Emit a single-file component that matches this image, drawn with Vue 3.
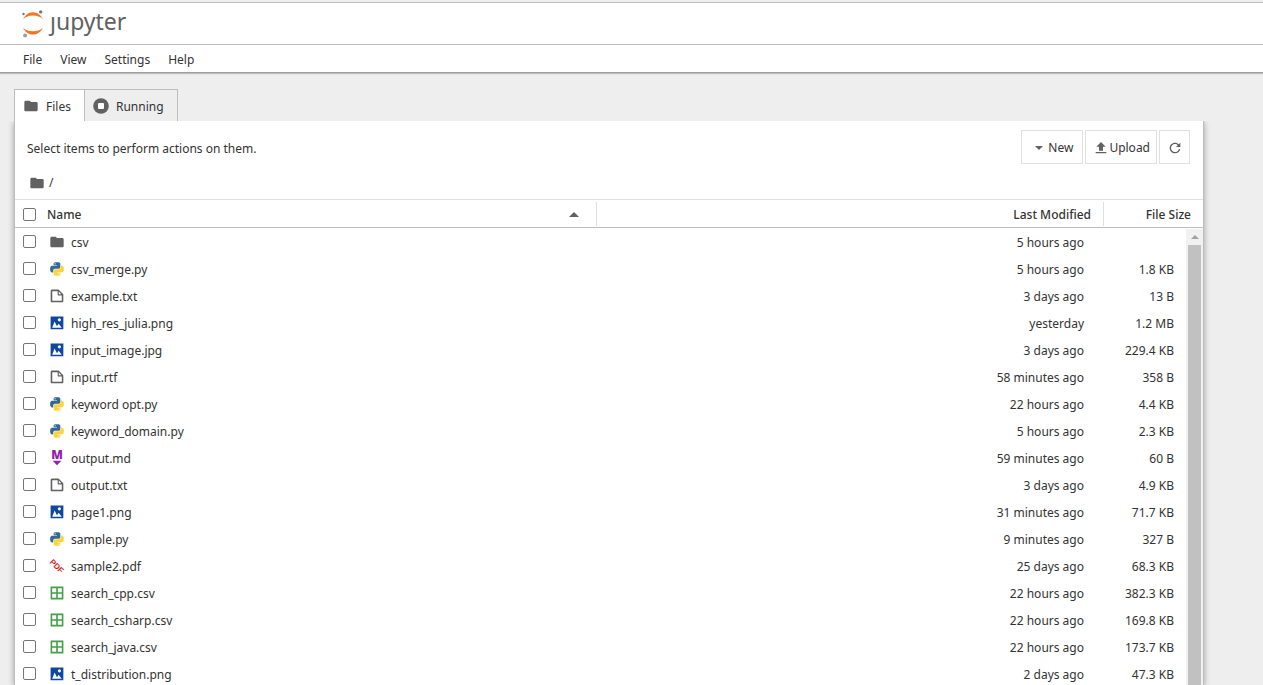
<script setup>
import { ref } from 'vue'

const menus = ['File', 'View', 'Settings', 'Help']

const files = ref([
  { name: 'csv', type: 'folder', modified: '5 hours ago', size: '' },
  { name: 'csv_merge.py', type: 'python', modified: '5 hours ago', size: '1.8 KB' },
  { name: 'example.txt', type: 'file', modified: '3 days ago', size: '13 B' },
  { name: 'high_res_julia.png', type: 'image', modified: 'yesterday', size: '1.2 MB' },
  { name: 'input_image.jpg', type: 'image', modified: '3 days ago', size: '229.4 KB' },
  { name: 'input.rtf', type: 'file', modified: '58 minutes ago', size: '358 B' },
  { name: 'keyword opt.py', type: 'python', modified: '22 hours ago', size: '4.4 KB' },
  { name: 'keyword_domain.py', type: 'python', modified: '5 hours ago', size: '2.3 KB' },
  { name: 'output.md', type: 'markdown', modified: '59 minutes ago', size: '60 B' },
  { name: 'output.txt', type: 'file', modified: '3 days ago', size: '4.9 KB' },
  { name: 'page1.png', type: 'image', modified: '31 minutes ago', size: '71.7 KB' },
  { name: 'sample.py', type: 'python', modified: '9 minutes ago', size: '327 B' },
  { name: 'sample2.pdf', type: 'pdf', modified: '25 days ago', size: '68.3 KB' },
  { name: 'search_cpp.csv', type: 'sheet', modified: '22 hours ago', size: '382.3 KB' },
  { name: 'search_csharp.csv', type: 'sheet', modified: '22 hours ago', size: '169.8 KB' },
  { name: 'search_java.csv', type: 'sheet', modified: '22 hours ago', size: '173.7 KB' },
  { name: 't_distribution.png', type: 'image', modified: '2 days ago', size: '47.3 KB' }
].map((f) => ({ ...f, selected: false })))

const allSelected = ref(false)
function toggleAll() {
  files.value.forEach((f) => { f.selected = allSelected.value })
}
</script>

<template>
  <div class="page">
    <svg class="defs" aria-hidden="true">
      <symbol id="i-folder" viewBox="0 0 24 24">
        <path fill="#616161" d="M10 4H4c-1.1 0-1.99.9-1.99 2L2 18c0 1.1.9 2 2 2h16c1.1 0 2-.9 2-2V8c0-1.1-.9-2-2-2h-8l-2-2z" />
      </symbol>
      <symbol id="i-file" viewBox="0 0 22 22">
        <path fill="#616161" d="M19.3 8.2l-5.5-5.5c-.3-.3-.7-.5-1.2-.5H3.9c-.8.1-1.6.9-1.6 1.8v14.1c0 .9.7 1.6 1.6 1.6h14.2c.9 0 1.6-.7 1.6-1.6V9.4c.1-.5-.1-.9-.4-1.2zm-5.8-3.3l3.4 3.6h-3.4V4.9zm3.9 12.7H4.7c-.1 0-.2 0-.2-.2V4.7c0-.2.1-.3.2-.3h7.2v4.4s0 .8.3 1.1c.3.3 1.1.3 1.1.3h4.3v7.2s-.1.2-.2.2z" />
      </symbol>
      <symbol id="i-image" viewBox="0 0 22 22">
        <path fill="#fff" d="M2.2 2.2h17.5v17.5H2.2z" />
        <path fill="#0d47a1" d="M2.2 2.2v17.5h17.5l.1-17.5H2.2zm12.1 2.2c1.2 0 2.2 1 2.2 2.2s-1 2.2-2.2 2.2-2.2-1-2.2-2.2 1-2.2 2.2-2.2zM4.4 17.6l3.3-8.8 3.3 6.6 2.2-3.2 4.4 5.4H4.4z" />
      </symbol>
      <symbol id="i-sheet" viewBox="0 0 22 22">
        <path fill="#43a047" d="M2.2 2.2v17.6h17.6V2.2H2.2zm15.4 7.7h-5.5V4.4h5.5v5.5zM9.9 4.4v5.5H4.4V4.4h5.5zm-5.5 7.7h5.5v5.5H4.4v-5.5zm7.7 5.5v-5.5h5.5v5.5h-5.5z" />
      </symbol>
      <symbol id="i-python" viewBox="-2 -2 28 28">
        <path fill="#306998" d="M14.25.18l.9.2.73.26.59.3.45.32.34.34.25.34.16.33.1.3.04.26.02.2-.01.13V8.5l-.05.63-.13.55-.21.46-.26.38-.3.31-.33.25-.35.19-.35.14-.33.1-.3.07-.26.04-.21.02H8.77l-.69.05-.59.14-.5.22-.41.27-.33.32-.27.35-.2.36-.15.37-.1.35-.07.32-.04.27-.02.21v3.06H3.17l-.21-.03-.28-.07-.32-.12-.35-.18-.36-.26-.36-.36-.35-.46-.32-.59-.28-.73-.21-.88-.14-1.05-.05-1.23.06-1.22.16-1.04.24-.87.32-.71.36-.57.4-.44.42-.33.42-.24.4-.16.36-.1.32-.05.24-.01h.16l.06.01h8.16v-.83H6.18l-.01-2.75-.02-.37.05-.34.11-.31.17-.28.25-.26.31-.23.38-.2.44-.18.51-.15.58-.12.64-.1.71-.06.77-.04.84-.02 1.27.05zm-6.3 1.98l-.23.33-.08.41.08.41.23.34.33.22.41.09.41-.09.33-.22.23-.34.08-.41-.08-.41-.23-.33-.33-.22-.41-.09-.41.09z" />
        <path fill="#ffd43b" transform="rotate(180 12 12)" d="M14.25.18l.9.2.73.26.59.3.45.32.34.34.25.34.16.33.1.3.04.26.02.2-.01.13V8.5l-.05.63-.13.55-.21.46-.26.38-.3.31-.33.25-.35.19-.35.14-.33.1-.3.07-.26.04-.21.02H8.77l-.69.05-.59.14-.5.22-.41.27-.33.32-.27.35-.2.36-.15.37-.1.35-.07.32-.04.27-.02.21v3.06H3.17l-.21-.03-.28-.07-.32-.12-.35-.18-.36-.26-.36-.36-.35-.46-.32-.59-.28-.73-.21-.88-.14-1.05-.05-1.23.06-1.22.16-1.04.24-.87.32-.71.36-.57.4-.44.42-.33.42-.24.4-.16.36-.1.32-.05.24-.01h.16l.06.01h8.16v-.83H6.18l-.01-2.75-.02-.37.05-.34.11-.31.17-.28.25-.26.31-.23.38-.2.44-.18.51-.15.58-.12.64-.1.71-.06.77-.04.84-.02 1.27.05zm-6.3 1.98l-.23.33-.08.41.08.41.23.34.33.22.41.09.41-.09.33-.22.23-.34.08-.41-.08-.41-.23-.33-.33-.22-.41-.09-.41.09z" />
      </symbol>
    </svg>

    <header class="top">
      <div class="brand">
        <svg class="mark" viewBox="0 0 22 28" aria-hidden="true">
          <path fill="#f37726" d="M1 9.400C3 5 6.500 2.200 11 2.200S19 5 21 9.400C18.600 6.800 15 5.600 11 5.600S3.400 6.800 1 9.400z" />
          <path fill="#f37726" d="M1 17.400C3.400 20 7 21.200 11 21.200S18.600 20 21 17.400C19 21.800 15.500 24.600 11 24.600S3 21.800 1 17.400z" />
          <circle cx="18.700" cy="1.900" r="1.700" fill="#767677" />
          <circle cx="1.500" cy="4" r="1.200" fill="#767677" />
          <circle cx="3.100" cy="25.600" r="2" fill="#9e9e9e" />
        </svg>
        <span class="wordmark">ȷupyter</span>
      </div>
      <nav class="menu">
        <button v-for="m in menus" :key="m" type="button">{{ m }}</button>
      </nav>
    </header>

    <main class="main">
      <div class="tabs" role="tablist">
        <button class="tab active" type="button" role="tab" aria-selected="true">
          <svg class="icon"><use href="#i-folder" /></svg><span>Files</span>
        </button>
        <button class="tab" type="button" role="tab" aria-selected="false">
          <svg class="icon" viewBox="0 0 16 16">
            <circle cx="8" cy="8" r="7.800" fill="#616161" />
            <rect x="5" y="5" width="6" height="6" rx="1" fill="#fff" />
          </svg><span>Running</span>
        </button>
      </div>

      <section class="panel">
        <div class="toolbar">
          <span>Select items to perform actions on them.</span>
          <div class="actions">
            <button class="act new" type="button">
              <svg class="caret" viewBox="0 0 8 4"><path d="M0 0h8L4 4z" fill="#616161" /></svg>New
            </button>
            <button class="act" type="button">
              <svg class="icon" viewBox="0 0 24 24"><path fill="#616161" d="M9 16h6v-6h4l-7-7-7 7h4zm-5 2h16v2H4z" /></svg>Upload
            </button>
            <button class="act" type="button" aria-label="Refresh">
              <svg class="icon" viewBox="0 0 18 18"><path fill="#616161" d="M9 13.500c-2.490 0-4.500-2.010-4.500-4.500S6.510 4.500 9 4.500c1.240 0 2.360.52 3.170 1.330L10 8h5V3l-1.760 1.760C12.150 3.680 10.660 3 9 3 5.690 3 3.010 5.690 3.010 9S5.690 15 9 15c2.970 0 5.430-2.160 5.900-5h-1.520c-.46 2-2.240 3.500-4.380 3.500z" /></svg>
            </button>
          </div>
        </div>
        <div class="crumbs">
          <a href="#" aria-label="Home"><svg class="icon"><use href="#i-folder" /></svg></a><span>/</span>
        </div>

        <div class="listing">
          <table>
            <colgroup>
              <col class="c-name" />
              <col />
              <col class="c-size" />
            </colgroup>
            <thead>
              <tr>
                <th scope="col">
                  <div class="cell head first">
                    <input v-model="allSelected" type="checkbox" aria-label="Select all" @change="toggleAll" />
                    <span class="label">Name</span>
                    <svg class="sort" viewBox="0 0 10 5"><path d="M0 5h10L5 0z" fill="#616161" /></svg>
                  </div>
                </th>
                <th scope="col"><div class="cell head second"><span>Last Modified</span></div></th>
                <th scope="col"><div class="cell head third"><span>File Size</span></div></th>
              </tr>
            </thead>
            <tbody>
              <tr v-for="f in files" :key="f.name">
                <td>
                  <div class="cell first">
                    <input v-model="f.selected" type="checkbox" :aria-label="'Select ' + f.name" />
                    <svg v-if="f.type === 'markdown'" class="icon" viewBox="0 0 16 16">
                      <text class="glyph md" x="8" y="9" text-anchor="middle">M</text>
                      <path d="M3.600 10.800h8.800L8 15.200z" fill="#8e24aa" />
                    </svg>
                    <svg v-else-if="f.type === 'pdf'" class="icon" viewBox="0 0 16 16">
                      <text class="glyph pdf" x="8" y="11" text-anchor="middle" transform="rotate(45 8 8)">PDF</text>
                    </svg>
                    <svg v-else class="icon"><use :href="'#i-' + f.type" /></svg>
                    <span>{{ f.name }}</span>
                  </div>
                </td>
                <td><div class="cell second"><span>{{ f.modified }}</span></div></td>
                <td><div class="cell third"><span>{{ f.size }}</span></div></td>
              </tr>
            </tbody>
          </table>
          <div class="scrollbar" aria-hidden="true">
            <svg class="up" viewBox="0 0 8 4"><path d="M0 4h8L4 0z" fill="#a3a3a3" /></svg>
            <div class="thumb"></div>
          </div>
        </div>
      </section>
    </main>
  </div>
</template>

<style>
body { background: #eee; overflow: hidden; }
</style>

<style scoped>
.page {
  height: 100vh;
  overflow: hidden;
  display: flex;
  flex-direction: column;
  font: 12px/18px "Noto Sans", "Open Sans", sans-serif;
  color: #333;
}
.defs { position: absolute; width: 0; height: 0; }
button { font: inherit; color: inherit; background: none; border: 0; padding: 0; margin: 0; }
.icon { width: 16px; height: 16px; flex: none; display: block; overflow: visible; }

.top {
  margin-top: 2px;
  background: #fff;
  border-top: 1px solid #bdbdbd;
  border-bottom: 1px solid #9e9e9e;
  box-shadow: 0 1px 1px #bdbdbd;
}
.brand {
  height: 41px;
  padding-left: 22px;
  display: flex;
  align-items: center;
  gap: 6px;
  border-bottom: 1px solid #bdbdbd;
}
.mark { width: 22px; height: 28px; overflow: visible; }
.wordmark { font-size: 23px; line-height: 24px; color: #616161; padding-bottom: 6px; }
.menu { height: 27px; padding-left: 23px; display: flex; align-items: center; gap: 18px; padding-top: 3px; box-sizing: border-box; }

.main { flex: 1; min-height: 0; padding: 16px 59px 0 14px; display: flex; flex-direction: column; }
.tabs { display: flex; }
.tab {
  height: 32px;
  display: flex;
  align-items: center;
  gap: 7px;
  padding: 1px 13px 0 8px;
  border: 1px solid #bdbdbd;
  border-bottom: 0;
}
.tab span { padding-top: 2px; }
.tab + .tab { border-left: 0; }
.tab.active { background: #fff; position: relative; z-index: 1; }

.panel {
  flex: 1;
  min-height: 0;
  background: #fff;
  border: 1px solid #bdbdbd;
  border-top: 0;
  border-bottom: 0;
  box-shadow: 0 1px 6px #9e9e9e;
  clip-path: inset(0 -8px 0 -8px);
  display: flex;
  flex-direction: column;
}
.toolbar {
  height: 52px;
  flex: none;
  display: flex;
  align-items: center;
  justify-content: space-between;
  padding: 0 13px 0 12px;
}
.toolbar span { padding-top: 4px; }
.actions { display: flex; gap: 2px; }
.act {
  height: 34px;
  box-sizing: border-box;
  border: 1px solid #e0e0e0;
  padding: 1px 6px 0 7px;
  display: flex;
  align-items: center;
}
.act.new { padding: 2px 9px 0 13px; gap: 5px; }
.caret { width: 8px; height: 4px; }
.crumbs { height: 26px; box-sizing: border-box; flex: none; display: flex; align-items: center; gap: 4px; padding: 0 14px 7px; }

.listing { flex: 1; min-height: 0; overflow: hidden; position: relative; border-top: 1px solid #e0e0e0; }
table { width: 100%; border-collapse: collapse; table-layout: fixed; }
.c-name { width: 49%; }
.c-size { width: 99px; }
th { padding: 0; font-weight: 500; text-align: left; color: #333; border-bottom: 1px solid #bdbdbd; }
td { padding: 0; }
.cell { height: 27px; box-sizing: border-box; display: flex; align-items: center; white-space: nowrap; }
.cell span { padding-top: 2px; }
.first { padding-left: 8px; }
.second { justify-content: flex-end; padding-right: 20px; }
.third { justify-content: flex-end; padding-right: 29px; }
.head { height: 24px; margin: 2px 0 1px; border-right: 1px solid #e0e0e0; }
.head.second { padding-right: 12px; }
.head.third { padding-right: 12px; border-right: 0; }
.cell .label { padding-left: 11px; flex: 1; }
.sort { width: 10px; height: 5px; margin-right: 17px; }
.cell .icon { margin: 1px 6px 0 13px; }
input {
  appearance: none;
  width: 13px;
  height: 13px;
  margin: 0;
  flex: none;
  background: #fff;
  border: 1px solid #767676;
  border-radius: 2px;
}
input:checked { background: #1976d2; }
.glyph { font-family: "Open Sans", "Noto Sans", sans-serif; font-weight: 800; }
.md { font-size: 12px; fill: #8e24aa; }
.pdf { font-family: "Liberation Sans", sans-serif; font-weight: 700; font-size: 8px; fill: #e51c23; }

.scrollbar {
  position: absolute;
  top: 29px;
  right: 0;
  bottom: 0;
  width: 17px;
  box-sizing: border-box;
  padding: 0 2px;
  background: #f1f1f1;
  display: flex;
  flex-direction: column;
  align-items: center;
}
.up { width: 8px; height: 4px; margin: 6px 0; }
.thumb { flex: 1; width: 100%; background: #c1c1c1; }
</style>
